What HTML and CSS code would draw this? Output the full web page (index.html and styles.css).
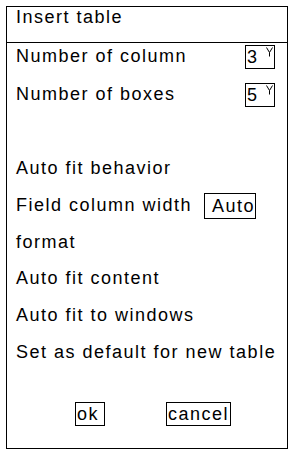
FILE: index.html
```html
<!DOCTYPE html>
<html>
<head>
<meta charset="utf-8">
<link rel="stylesheet" href="styles.css">
</head>
<body>
<div class="dialog">
  <div class="header">Insert table</div>
  <div class="content">
    <div class="row row-first">
      <span>Number of column</span>
      <span class="select">3<svg class="caret" width="7" height="10" viewBox="0 0 7 10"><path d="M0.5 0.5 L3.5 5.5 L6.5 0.5 M3.5 5.5 L3.5 9.5" fill="none" stroke="#000" stroke-width="1"/></svg></span>
    </div>
    <div class="row">
      <span>Number of boxes</span>
      <span class="select">5<svg class="caret" width="7" height="10" viewBox="0 0 7 10"><path d="M0.5 0.5 L3.5 5.5 L6.5 0.5 M3.5 5.5 L3.5 9.5" fill="none" stroke="#000" stroke-width="1"/></svg></span>
    </div>
    <div class="row"></div>
    <div class="row">Auto fit behavior</div>
    <div class="row row-start">
      <span>Field column width</span>
      <span class="field">Auto</span>
    </div>
    <div class="row row-tight">format</div>
    <div class="row">Auto fit content</div>
    <div class="row">Auto fit to windows</div>
    <div class="row">Set as default for new table</div>
    <div class="buttons">
      <span class="btn btn-ok">ok</span>
      <span class="btn btn-cancel">cancel</span>
    </div>
  </div>
</div>
</body>
</html>
```
FILE: styles.css
```css
html, body {
  margin: 0;
  padding: 0;
  background: #fff;
}
.dialog {
  margin: 6px 0 0 6px;
  width: 282px;
  height: 443px;
  box-sizing: border-box;
  border: 1px solid #000;
  font-family: "Liberation Sans", Arial, sans-serif;
  font-size: 18px;
  letter-spacing: 1.5px;
  color: #000;
  display: flex;
  flex-direction: column;
}
.header {
  height: 36px;
  box-sizing: border-box;
  border-bottom: 1px solid #000;
  padding-left: 9px;
  line-height: 21px;
}
.content {
  display: flex;
  flex-direction: column;
  gap: 16px;
  padding: 3px 12px 0 9px;
}
.row {
  height: 21px;
  line-height: 21px;
  display: flex;
  align-items: center;
  justify-content: space-between;
  white-space: nowrap;
}
.row-first {
  margin-bottom: 1px;
}
.row-start {
  justify-content: flex-start;
}
.row-tight {
  margin-bottom: -1px;
}
.select {
  width: 30px;
  height: 24px;
  box-sizing: border-box;
  border: 1px solid #000;
  line-height: 22px;
  padding-left: 1px;
  display: flex;
  justify-content: space-between;
  align-items: flex-start;
  padding-right: 1px;
}
.caret {
  margin-top: 1px;
}
.field {
  margin-left: 12px;
  width: 52px;
  height: 26px;
  box-sizing: border-box;
  border: 1px solid #000;
  line-height: 24px;
  padding-left: 7px;
  overflow: hidden;
}
.buttons {
  margin-top: 23px;
  margin-left: 59px;
  display: flex;
  gap: 61px;
}
.btn {
  height: 24px;
  box-sizing: border-box;
  border: 1px solid #000;
  line-height: 22px;
  padding-left: 1px;
  overflow: hidden;
  white-space: nowrap;
}
.btn-ok {
  width: 30px;
}
.btn-cancel {
  width: 65px;
}
```
